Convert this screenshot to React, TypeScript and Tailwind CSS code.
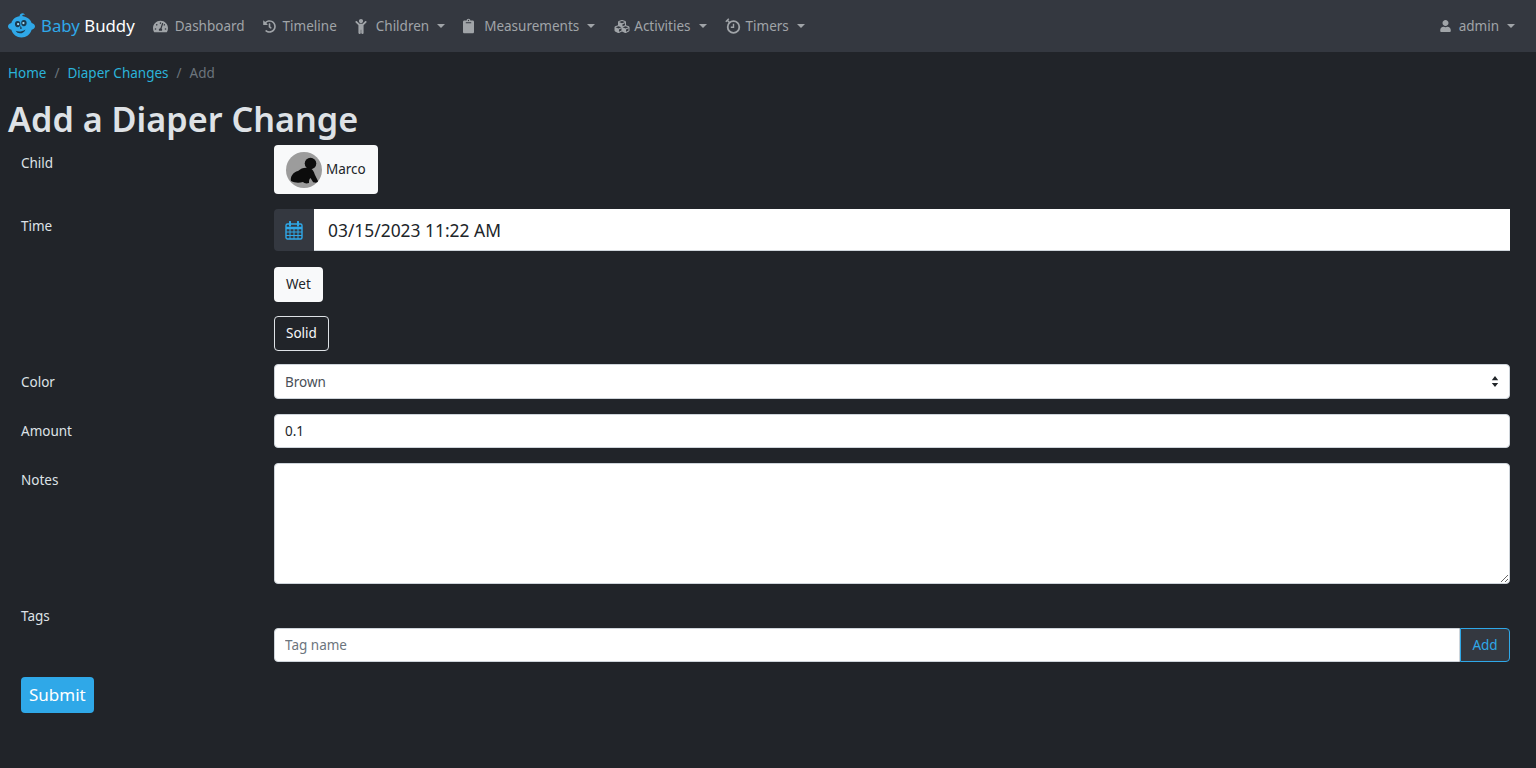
import React from "react";
import { FaTachometerAlt, FaHistory, FaChild, FaClipboard, FaCubes, FaUser } from "react-icons/fa";

const Caret = () => (
  <span className="ml-[8px] inline-block border-x-[4px] border-t-[4.5px] border-x-transparent border-t-[#a0a4a8] align-middle" />
);

const BabyLogo = () => (
  <svg viewBox="0 0 28 30" className="h-[30px] w-[27px] shrink-0">
    <path d="M12 5c0-2 2-3.500 4-3 1 .3 1.500 1 1.500 1.800-.8-.6-2.500-.6-2.800.9C20 5.500 23.500 8.500 24.500 12c2 .5 3.500 2 3.500 3.500s-1.500 3-3.500 3.500c-1.500 5-5.500 8-10.500 8s-9-3-10.500-8C1.500 18.500 0 17 0 15.500S1.500 12.500 3.500 12C4.700 8 8 5.500 12 5z" fill="#2fa8e8" />
    <ellipse cx="10" cy="13" rx="2.800" ry="3.200" fill="#1b3a4f" />
    <ellipse cx="16.500" cy="12" rx="2.800" ry="3.200" fill="#1b3a4f" />
    <circle cx="10.500" cy="13" r="1.200" fill="#9edcf8" />
    <circle cx="16" cy="12" r="1.200" fill="#9edcf8" />
    <path d="M13 14.500l1.500 3-2 .5z" fill="#1b3a4f" />
    <path d="M8 20c3 1.200 7 .8 10-1.500-.5 4-8 6-10 1.500z" fill="#1b3a4f" />
  </svg>
);

const TimerIcon = () => (
  <svg viewBox="0 0 16 16" className="h-[16px] w-[16px]" fill="none" stroke="currentColor">
    <circle cx="8.500" cy="9" r="5.800" strokeWidth="1.800" />
    <path d="M8.500 5.800V9.200H5.800" strokeWidth="1.400" />
    <path d="M.8 3.800L3.800.8M2.300 2.300L4.500 4.500" strokeWidth="1.500" />
  </svg>
);

const CalendarIcon = () => (
  <svg viewBox="0 0 18 19" className="h-[19px] w-[18px]" fill="none" stroke="currentColor">
    <rect x="1" y="3" width="16" height="15" rx="1.500" strokeWidth="1.400" />
    <path d="M1 7h16" strokeWidth="2.500" />
    <path d="M1 11h16M1 14.500h16M5 7v11M9 7v11M13 7v11" strokeWidth="1" />
    <path d="M5 .8v4M13 .8v4" strokeWidth="2" strokeLinecap="round" />
  </svg>
);

const BabyAvatar = () => (
  <svg viewBox="0 0 36 36" className="h-9 w-9 shrink-0">
    <circle cx="18" cy="18" r="18" fill="#9c9c9c" />
    <circle cx="24.500" cy="11.500" r="5.800" fill="#0c0c0c" />
    <path d="M5 29C4 25 7 20 12 19C15 16 19 15 23 16C27 17 28 20 29 23L32 29C32 31 28 31 27 30L24.500 26C23 27 23 29 23 31C20 32 18 31 17 30C13 31 9 31 5 29z" fill="#0c0c0c" />
  </svg>
);

const NavItem = ({ icon, label, caret, gap }: { icon: React.ReactNode; label: string; caret?: boolean; gap: string }) => (
  <a className={`flex items-center text-[13.5px] text-[#a0a4a8] ${gap}`}>
    {icon}
    <span className="flex items-center">
      {label}
      {caret && <Caret />}
    </span>
  </a>
);

const Row = ({ label, className, labelClass, children }: { label?: string; className?: string; labelClass?: string; children: React.ReactNode }) => (
  <div className={`flex ${className ?? ""}`}>
    <label className={`w-[274px] shrink-0 pl-[21px] text-[13.5px] leading-5 text-[#dee2e6] ${labelClass ?? ""}`}>{label}</label>
    <div className="min-w-0 flex-1">{children}</div>
  </div>
);

const inputCls = "w-full rounded-[4px] border border-[#ced4da] bg-white px-[10px] text-[13.5px] text-[#212529] outline-none";

export default function App() {
  return (
    <div className="min-h-[768px] bg-[#212429] pr-[26px] font-['Noto_Sans','Open_Sans',sans-serif]">
      <nav className="-mr-[26px] flex h-[52px] items-center justify-between bg-[#343840] pl-2 pr-[21px]">
        <div className="flex items-center gap-[18px]">
          <a className="flex items-center gap-[6px] text-[16.8px] text-white">
            <BabyLogo />
            <span><span className="text-[#2fa8e8]">Baby</span> Buddy</span>
          </a>
          <NavItem gap="gap-[7px]" icon={<FaTachometerAlt className="h-[15px] w-[15px]" />} label="Dashboard" />
          <NavItem gap="gap-[7px]" icon={<FaHistory className="h-[13px] w-[13px]" />} label="Timeline" />
          <NavItem gap="gap-[9px]" icon={<FaChild className="h-[15px] w-[12px]" />} label="Children" caret />
          <NavItem gap="gap-[10px]" icon={<FaClipboard className="h-[16px] w-[11px]" />} label="Measurements" caret />
          <NavItem gap="gap-[3px]" icon={<FaCubes className="h-[15px] w-[18px]" />} label="Activities" caret />
          <NavItem gap="gap-[5px]" icon={<TimerIcon />} label="Timers" caret />
        </div>
        <NavItem gap="gap-[8px]" icon={<FaUser className="h-[12px] w-[11px]" />} label="admin" caret />
      </nav>

      <div className="flex h-[42px] items-center gap-2 pl-2 text-[13.5px] text-[#6c757d]">
        <a className="text-[#2bb3d9]">Home</a>
        <span>/</span>
        <a className="text-[#2bb3d9]">Diaper Changes</a>
        <span>/</span>
        <span>Add</span>
      </div>

      <h1 className="h-[51px] pl-2 text-[34.2px] font-semibold leading-[50px] text-[#dee2e6]">Add a Diaper Change</h1>

      <Row label="Child" className="h-[64px]" labelClass="pt-2">
        <button className="flex h-[49px] items-center gap-1 rounded-[4px] bg-[#f8f9fa] px-[12px] text-[13.5px] text-[#212529]">
          <BabyAvatar />
          Marco
        </button>
      </Row>

      <Row label="Time" className="h-[58px]" labelClass="pt-[7px]">
        <div className="flex h-[42px]">
          <span className="flex w-[40px] items-center justify-center rounded-l-[4px] bg-[#343840] text-[#2fa8e8]">
            <CalendarIcon />
          </span>
          <input readOnly value="03/15/2023 11:22 AM" className="h-full flex-1 border-b border-[#ced4da] bg-white px-[14px] pt-px text-[17.4px] text-[#212529] outline-none" />
        </div>
      </Row>

      <Row className="h-[49px]">
        <button className="h-[35px] rounded-[4px] bg-[#f8f9fa] px-[12px] text-[13.5px] text-[#212529]">Wet</button>
      </Row>

      <Row className="h-[48px]">
        <button className="h-[35px] rounded-[4px] border border-[#dee2e6] px-[11px] text-[13.5px] text-[#f8f9fa]">Solid</button>
      </Row>

      <Row label="Color" className="h-[50px]" labelClass="pt-2">
        <div className="relative">
          <div className={`${inputCls} flex h-[35px] items-center pt-px text-[#495057]`}>Brown</div>
          <svg viewBox="0 0 8 12" className="absolute right-[11px] top-[12px] h-[11px] w-2">
            <path d="M4 0l3.500 4.500h-7zM4 12L.5 7.500h7z" fill="#212529" />
          </svg>
        </div>
      </Row>

      <Row label="Amount" className="h-[49px]" labelClass="pt-[7px]">
        <input readOnly value="0.1" className={`${inputCls} block h-[34px]`} />
      </Row>

      <Row label="Notes" className="h-[136px]" labelClass="pt-[7px]">
        <textarea readOnly className={`${inputCls} block h-[121px] resize-y`} />
      </Row>

      <Row label="Tags" className="h-[74px]" labelClass="pt-[7px]">
        <div className="mt-[29px] flex h-[34px]">
          <input readOnly placeholder="Tag name" className="h-full flex-1 rounded-l-[4px] border border-[#ced4da] bg-white px-[10px] text-[13.5px] outline-none placeholder:text-[#6c757d]" />
          <button className="h-full w-[50px] rounded-r-[4px] border border-[#2fa8e8] bg-[#343840] text-[13.5px] text-[#2fa8e8]">Add</button>
        </div>
      </Row>

      <div className="pl-[21px] pt-[4px]">
        <button className="h-[36px] rounded-[4px] bg-[#2fa8e8] px-2 text-[17px] text-white">Submit</button>
      </div>
    </div>
  );
}
